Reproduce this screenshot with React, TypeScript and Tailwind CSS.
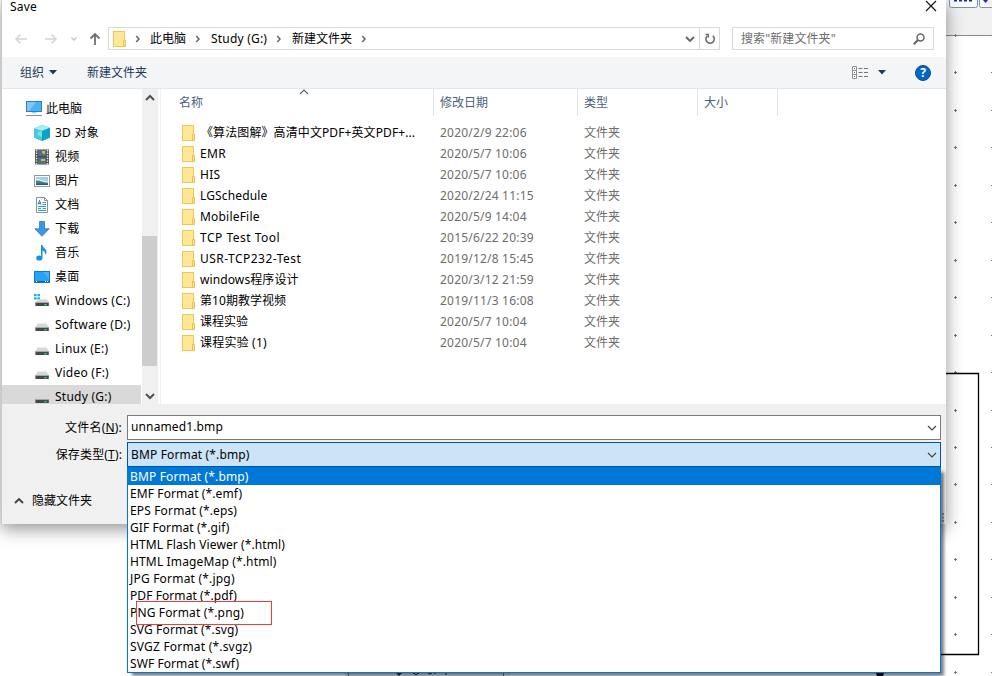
import React from 'react';

const files: [string, string, string][] = [
  ['《算法图解》高清中文PDF+英文PDF+...', '2020/2/9 22:06', 'tracking-[0.1px]'],
  ['EMR', '2020/5/7 10:06', 'tracking-[0.4px]'],
  ['HIS', '2020/5/7 10:06', 'tracking-[0.3px]'],
  ['LGSchedule', '2020/2/24 11:15', 'tracking-[0.15px]'],
  ['MobileFile', '2020/5/9 14:04', 'tracking-[0.2px]'],
  ['TCP Test Tool', '2015/6/22 20:39', 'tracking-[0.5px]'],
  ['USR-TCP232-Test', '2019/12/8 15:45', 'tracking-[0.47px]'],
  ['windows程序设计', '2020/3/12 21:59', 'tracking-[0.1px]'],
  ['第10期教学视频', '2019/11/3 16:08', 'tracking-[0.05px]'],
  ['课程实验', '2020/5/7 10:04', 'tracking-[0px]'],
  ['课程实验 (1)', '2020/5/7 10:04', 'tracking-[0.2px]'],
];

const formats: [string, string][] = [
  ['BMP Format (*.bmp)', 'tracking-[0.15px]'],
  ['EMF Format (*.emf)', 'tracking-[0.1px]'],
  ['EPS Format (*.eps)', 'tracking-[0.15px]'],
  ['GIF Format (*.gif)', 'tracking-[0.08px]'],
  ['HTML Flash Viewer (*.html)', 'tracking-[0.1px]'],
  ['HTML ImageMap (*.html)', 'tracking-[0.15px]'],
  ['JPG Format (*.jpg)', 'tracking-[0.2px]'],
  ['PDF Format (*.pdf)', 'tracking-[0.08px]'],
  ['PNG Format (*.png)', 'tracking-[0.15px]'],
  ['SVG Format (*.svg)', 'tracking-[0.15px]'],
  ['SVGZ Format (*.svgz)', 'tracking-[0.2px]'],
  ['SWF Format (*.swf)', 'tracking-[0.08px]'],
];

const tree: [string, string][] = [
  ['cube', '3D 对象'],
  ['film', '视频'],
  ['photo', '图片'],
  ['doc', '文档'],
  ['down', '下载'],
  ['music', '音乐'],
  ['desk', '桌面'],
  ['windrive', 'Windows (C:)'],
  ['drive', 'Software (D:)'],
  ['drive', 'Linux (E:)'],
  ['drive', 'Video (F:)'],
  ['drive', 'Study (G:)'],
];

function Folder() {
  return (
    <svg width="14" height="16" viewBox="0 0 14 16" className="shrink-0">
      <rect x="0.5" y="0.5" width="11" height="15" fill="#ffe797" stroke="#efc94f" />
      <path d="M10.5 15.5v-6h2v6z" fill="#ffe797" stroke="#e8c148" />
    </svg>
  );
}

function Drive({ win = false }: { win?: boolean }) {
  return (
    <>
      {win && (
        <path d="M0 1h2.6v2.3H0zM3.4 1H6v2.3H3.4zM0 4.2h2.6v2.3H0zM3.4 4.2H6v2.3H3.4z" fill="#18b1ee" />
      )}
      <path d={win ? 'M4 6.2h9l2 3.6H1.6z' : 'M3.5 5.5h9l2.3 4.3H1.4z'} fill="#d5d7da" />
      <path d="M1.4 9.2h13.4v3.8H1.4z" fill="#45484b" />
      <path d="M1.4 9h13.4v1H1.4z" fill="#a5a8ac" />
      <rect x="10.5" y="11" width="2" height="1.3" fill="#43e453" />
    </>
  );
}

function TreeIcon({ kind }: { kind: string }) {
  return (
    <svg width="16" height="16" viewBox="0 0 16 16" className="shrink-0">
      {kind === 'pc' && (
        <>
          <rect x="0.5" y="0.5" width="15" height="10" fill="#48b4fb" stroke="#3b7fa8" />
          <path d="M1 1h9L3 10H1z" fill="#79cbff" />
          <path d="M5.5 11.3h5v1h-5z" fill="#8fb6d0" />
          <path d="M0 14h16v1H0z" fill="#7f93ab" />
        </>
      )}
      {kind === 'cube' && (
        <>
          <path d="M0 3.5 8 0l8 2.8v9.7L8 16 0 12.5z" fill="#27b3d0" />
          <path d="M0 3.5 8 0l8 2.8L8 6z" fill="#a6eef0" />
          <path d="M0 3.5 8 6v10l-8-3.5z" fill="#4cc7dc" />
          <path d="m8 6 8-3.2v9.7L8 16z" fill="#0aa3cb" />
          <path d="m4 7 4-1.2V12L3.5 9.8z" fill="#72e2e8" />
        </>
      )}
      {kind === 'film' && (
        <>
          <rect x="1" y="0.5" width="14" height="15" fill="#4b4b4b" />
          <path d="M2.5 1v15M13.5 1v15" stroke="#ececec" strokeWidth="1.5" strokeDasharray="1.4 1.2" />
          <path d="M4 1h8v6H4z" fill="#426cb0" />
          <path d="M4 8.500h8v6.500H4z" fill="#426cb0" />
          <path d="M8 2h3v3H8zM7 10h4v2H7z" fill="#e0b92e" />
          <path d="M5 4h3v2H5zM9 5h2v1H9zM5 12h4v2H5z" fill="#4a8a2e" />
          <path d="M7 4h2v1H7zM9 12h2v1H9z" fill="#d33b28" />
        </>
      )}
      {kind === 'photo' && (
        <>
          <rect x="0.5" y="2.5" width="15" height="11" fill="#fff" stroke="#929699" />
          <path d="M2 4h12v8H2z" fill="#9ccdf2" />
          <path d="M2 6c4 0 7 2 12 2.500V10H2z" fill="#e9f4fa" />
          <path d="M2 7.500c3-.6 6 1.800 12 2v1H2z" fill="#4d7d70" />
          <path d="M2 10.300h12V12H2z" fill="#265a7d" />
        </>
      )}
      {kind === 'doc' && (
        <>
          <path d="M2.500.5h8l3 3v12h-11z" fill="#fff" stroke="#8d9193" />
          <path d="M10.500.5v3h3" fill="none" stroke="#8d9193" />
          <path d="M8.500 5.500H12M8.500 7.500H12M4 9.500h8M4 11.500h3M4 13.500h8M8.500 11.500H12" stroke="#349bd0" />
          <path d="m4 7.500 1.500-4 1.500 4M4.500 6.500h2" fill="none" stroke="#2677b5" />
        </>
      )}
      {kind === 'down' && (
        <path d="M5.500.5h5v7.300h4.700L8 15.300.8 7.800h4.700z" fill="#3c97e3" stroke="#2d7fc6" strokeWidth="0.8" />
      )}
      {kind === 'music' && (
        <>
          <ellipse cx="5.3" cy="13" rx="3.1" ry="2.6" fill="#1590e4" />
          <path d="M7 0h1.500c.3 3 4.700 4.200 4 7.800-.2 1.200-.8 2-1.300 2.600.6-2.700-.3-4-2.700-5V13H7z" fill="#1590e4" />
        </>
      )}
      {kind === 'desk' && (
        <>
          <rect x="0.5" y="2.5" width="15" height="11" fill="#24a3f8" stroke="#1677bd" />
          <path d="M9 3h6v7z" fill="#45b4ff" />
          <path d="M1 12.500h14" stroke="#1364a2" />
          <path d="M2 12.500h1M11 12.500h3" stroke="#fff" strokeDasharray="1 1" />
        </>
      )}
      {kind === 'drive' && <g transform="translate(0 1)"><Drive /></g>}
      {kind === 'windrive' && <Drive win />}
    </svg>
  );
}

function Chevron({ className, d, w = 1.5 }: { className?: string; d: string; w?: number }) {
  return (
    <svg width="10" height="10" viewBox="0 0 10 10" className={'shrink-0 ' + (className ?? '')}>
      <path d={d} fill="none" stroke="currentColor" strokeWidth={w} />
    </svg>
  );
}

const RIGHT = 'm3.2 2 2.8 3-2.8 3';
const DOWN = 'm1 3 4 4 4-4';
const UP = 'm1 7 4-4 4 4';

const dotRows = Array.from({ length: 18 }, (_, i) => Math.round(35 + i * 37.45) + 0.5);

function Canvas() {
  return (
    <svg width="992" height="676" className="absolute inset-0">
      <path d="M940 0h52v35h-52z" fill="#f0f0f0" />
      <path d="M940 35.5h52" stroke="#8a8a8a" />
      <path d="M949.5-1v6.500q0 2 2 2h24q2 0 2-2V-1M979.500-1v6.500q0 2 2 2H992" fill="#f9fbfd" stroke="#7794b5" />
      <path d="M954 .5h18" stroke="#1d2d9b" strokeWidth="2" strokeDasharray="3 2" />
      <path d="M983 0h5l-2.500 3z" fill="#1d2d9b" />
      {dotRows.map((y) => (
        <path key={y} d={`M954 ${y}h3M955.5 ${y - 1.5}v3M991 ${y}h1`} stroke="#777" />
      ))}
      <path d="M940 373.5h38.500v281H940" fill="none" stroke="#000" strokeWidth="1.3" />
      <path d="M345 673h165v3H345z" fill="#e3e3e3" />
      <path d="M510 673h430v3H510z" fill="#f0f0f0" />
      <path d="M348.500 673v3M503.500 673v3" stroke="#777" />
      <path d="M396 673h6l-3 3z" fill="#333" />
      <path d="M413 673q3 3 6 0M428 673q2 2 4 0M434 673h2M446 673v2" fill="none" stroke="#222" />
      <path d="M876 673h8l-1 3h-6z" fill="#000" />
    </svg>
  );
}

export default function App() {
  return (
    <div className="relative h-[676px] w-[992px] overflow-hidden bg-white font-['Noto_Sans','Noto_Sans_CJK_SC',sans-serif] text-[12px] leading-[16px] text-black">
      <Canvas />
      <div className="relative ml-px flex h-[524px] w-[945px] flex-col border-l border-[#c9c9c9] bg-white shadow-[0_5px_16px_rgba(0,0,0,0.42)]">
        <div className="flex h-[27px] shrink-0 justify-between pl-2 pr-[9px]">
          <span className="leading-[14px] tracking-[0.2px]">Save</span>
          <svg width="12" height="12" viewBox="0 0 12 12"><path d="m1 1 10 10M11 1 1 11" stroke="#111" strokeWidth="1.1" /></svg>
        </div>
        <div className="flex h-[30px] shrink-0 pl-3">
          <div className="flex h-[23px] w-[94px] items-center">
            <svg width="90" height="16" viewBox="0 0 90 16" fill="none" strokeWidth="1.5">
              <path d="M13 8H2M6.500 3.500 2 8l4.500 4.500M31 8h11M37.500 3.500 42 8l-4.500 4.500" stroke="#d5d5d5" />
              <path d="m57.500 6.500 2.500 2.500 2.500-2.500" stroke="#c8c8c8" />
              <path d="M81 14V3M76.500 7.500 81 3l4.500 4.500" stroke="#6e6e6e" strokeWidth="1.8" />
            </svg>
          </div>
          <div className="flex h-[23px] w-[612px] items-center border border-[#d9d9d9] pl-1">
            <Folder />
            <Chevron d={RIGHT} className="ml-[6px] text-[#666]" />
            <span className="ml-[7px] w-[37px] whitespace-nowrap">此电脑</span>
            <Chevron d={RIGHT} className="ml-[6px] text-[#666]" />
            <span className="ml-2 w-[57px] whitespace-nowrap tracking-[0.2px]">Study (G:)</span>
            <Chevron d={RIGHT} className="ml-[6px] text-[#666]" />
            <span className="ml-2 w-[61px] whitespace-nowrap">新建文件夹</span>
            <Chevron d={RIGHT} className="ml-[6px] text-[#666]" />
            <Chevron d={DOWN} w={1.9} className="ml-auto text-[#666]" />
            <div className="ml-1 flex h-full w-[20px] items-center justify-center border-l border-[#d9d9d9]">
              <svg width="12" height="12" viewBox="0 0 12 12" fill="none" stroke="#666" strokeWidth="1.5">
                <path d="M8.800 2.800A4.200 4.200 0 1 1 3 3.200M1.500 1.500h2.800v3" />
              </svg>
            </div>
          </div>
          <div className="ml-3 flex h-[23px] w-[202px] items-center justify-between border border-[#d9d9d9] pl-[8px] pr-2 text-[#6d6d6d]">
            <span className="tracking-[0.1px]">搜索"新建文件夹"</span>
            <svg width="12" height="12" viewBox="0 0 12 12" fill="none" stroke="#666" strokeWidth="1.5">
              <circle cx="7.5" cy="4.5" r="3.5" /><path d="M5 7 .8 11.200" strokeWidth="2" />
            </svg>
          </div>
        </div>
        <div className="flex h-[32px] shrink-0 items-center border-b border-[#e4e6e8] bg-[#f4f5f7] pl-[18px] pr-[15px] text-[#1e395b]">
          <span>组织</span>
          <svg width="8" height="5" className="ml-[5px]"><path d="M0 0h8L4 4.500z" fill="#1e395b" /></svg>
          <span className="ml-[30px]">新建文件夹</span>
          <svg width="17" height="13" viewBox="0 0 17 13" className="ml-auto" fill="none">
            <path d="M.5.5h4v12h-4zM.5 4.500h4M.5 8.500h4" stroke="#8c9094" fill="#fff" />
            <path d="M6.500 2.500h4M12 2.500h4M6.500 6.500h4M12 6.500h4M6.500 10.500h4M12 10.500h4" stroke="#777" />
            <path d="M2 2.500h1" stroke="#666" /><path d="M2 6.500h1" stroke="#258be0" /><path d="M2 10.500h1" stroke="#d22" />
          </svg>
          <svg width="8" height="5" className="ml-[9px]"><path d="M0 0h8L4 4.500z" fill="#1e395b" /></svg>
          <div className="ml-[29px] flex size-4 items-center justify-center rounded-full border border-[#0a4f8f] bg-[#0066cc] text-[12px] font-bold text-white">?</div>
        </div>
        <div className="flex h-[315px] shrink-0">
          <div className="w-[139px] overflow-hidden pt-[8px]">
            <div className="flex h-6 items-center gap-[4px] pl-6"><TreeIcon kind="pc" /><span>此电脑</span></div>
            {tree.map(([icon, label], i) => (
              <div key={label} className={'flex h-6 items-center gap-[5px] whitespace-nowrap pl-8 tracking-[0.25px] ' + (i === 11 ? 'bg-[#d9d9d9]' : '')}>
                <TreeIcon kind={icon} /><span>{label}</span>
              </div>
            ))}
          </div>
          <div className="ml-px flex w-[16px] flex-col items-center bg-[#f0f0f0]">
            <Chevron d={UP} w={2} className="mt-1 text-[#505050]" />
            <div className="mt-[133px] h-[130px] w-[15px] self-start bg-[#cdcdcd]" />
            <Chevron d={DOWN} w={2} className="mt-[25px] text-[#505050]" />
          </div>
          <div className="ml-[2px] flex-1 border-l border-[#f0f0f0]">
            <div className="flex h-[27px] text-[#4c607a]">
              <div className="flex w-[273px] border-r border-[#e5e5e5] pl-[18px] pt-[6px]">
                <span className="w-[120px]">名称</span>
                <Chevron d="m1 6 4-4 4 4" w={1.1} className="-mt-[7px] text-[#606060]" />
              </div>
              <div className="w-[144px] border-r border-[#e5e5e5] pl-[6px] pt-[6px]">修改日期</div>
              <div className="w-[120px] border-r border-[#e5e5e5] pl-[6px] pt-[6px]">类型</div>
              <div className="w-[80px] border-r border-[#e5e5e5] pl-[6px] pt-[6px]">大小</div>
            </div>
            <div className="mt-[6px]">
              {files.map(([name, date, tracking], i) => (
                <div key={name} className="flex h-[21px] items-center whitespace-nowrap pl-[21px] text-[#6d6d6d]">
                  <Folder />
                  <span className={'w-[240px] text-black ' + tracking + (i === 0 ? ' pl-[5px]' : ' pl-1')}>{name}</span>
                  <span className="ml-[4px] w-[144px] tracking-[0.2px]">{date}</span>
                  <span>文件夹</span>
                </div>
              ))}
            </div>
          </div>
        </div>
        <div className="flex flex-1 flex-col bg-[#f0f0f0] pr-[5px] pt-[11px]">
          <div className="flex h-[25px]">
            <span className="w-[125px] whitespace-nowrap pr-[5px] pt-[5px] text-right tracking-[0.2px]">文件名(<u>N</u>):</span>
            <div className="flex flex-1 items-center justify-between border border-[#7a7a7a] bg-white pl-[3px] pr-[3px]">
              <span className="pb-px tracking-[0.13px]">unnamed1.bmp</span>
              <Chevron d={DOWN} w={1.1} className="text-[#404040]" />
            </div>
          </div>
          <div className="mt-[2px] flex h-[25px]">
            <span className="w-[125px] whitespace-nowrap pr-[5px] pt-[5px] text-right tracking-[0.15px]">保存类型(<u>T</u>):</span>
            <div className="flex flex-1 items-center justify-between border border-[#0056a0] bg-[#cce4f7] pl-[3px] pr-[3px]">
              <span className="tracking-[0.15px]">BMP Format (*.bmp)</span>
              <Chevron d={DOWN} w={1.1} className="text-[#404040]" />
            </div>
          </div>
          <div className="mt-[26px] flex items-center pl-3">
            <Chevron d={UP} w={1.8} className="text-[#404040]" />
            <span className="ml-2">隐藏文件夹</span>
          </div>
        </div>
        <svg width="3" height="9" className="absolute bottom-[2px] right-[1px]">
          <path d="M0 1h2M0 4.500h2M0 8h2" stroke="#a0a0a0" strokeWidth="2" />
        </svg>
      </div>
      <div className="absolute left-[127px] top-[467px] h-[206px] w-[814px] border border-[#0078d7] bg-white shadow-[4px_4px_3px_-1px_rgba(0,0,0,0.5)]">
        {formats.map(([label, tracking], i) => (
          <div key={label} className={'h-[17px] whitespace-nowrap pl-[2px] leading-[17px] ' + tracking + (i === 0 ? ' bg-[#0078d7] text-white' : '')}>{label}</div>
        ))}
      </div>
      <div className="absolute left-[136px] top-[601px] h-[24px] w-[136px] border border-[#f03c3c]" />
    </div>
  );
}
